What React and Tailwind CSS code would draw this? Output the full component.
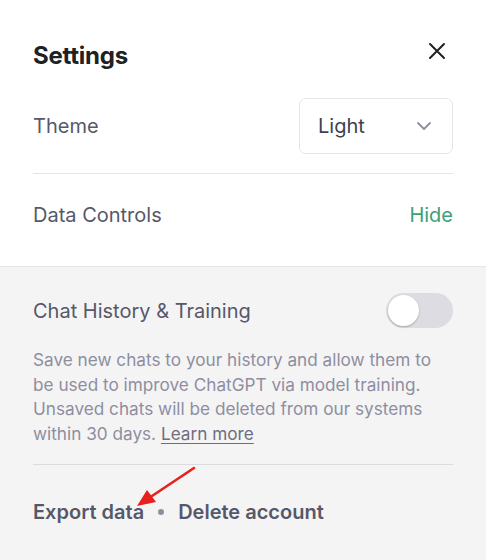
import React, { useState } from 'react';

function CloseIcon() {
  return (
    <svg width="18" height="18" viewBox="0 0 18 18" fill="none" stroke="#202123" strokeWidth="2" strokeLinecap="round">
      <path d="M2 2l14 14M16 2L2 16" />
    </svg>
  );
}

function Chevron() {
  return (
    <svg width="16" height="10" viewBox="0 0 16 10" fill="none" stroke="#8e8ea0" strokeWidth="1.8" strokeLinecap="round" strokeLinejoin="round">
      <path d="M2 2l6 6 6-6" />
    </svg>
  );
}

function Toggle({ on, onChange }) {
  return (
    <button
      onClick={() => onChange(!on)}
      className={`w-[67px] h-[35px] rounded-full p-[2px] flex items-center ${on ? 'bg-[#10a37f] justify-end' : 'bg-[#dcdce2] justify-start'}`}
    >
      <span className="block w-[31px] h-[31px] rounded-full bg-white shadow-[0_1px_2px_rgba(0,0,0,0.25)]" />
    </button>
  );
}

export default function App() {
  const [history, setHistory] = useState(false);

  return (
    <div className="w-[486px] h-[560px] bg-[#f4f4f5] font-['Inter',sans-serif] flex flex-col">
      <div className="bg-white px-[33px] pt-[36px] border-b border-[#e5e5e7]">
        <div className="flex items-center justify-between h-[34px]">
          <h1 className="text-[24px] font-bold text-[#202123] tracking-[-0.01em] mt-[5px]">Settings</h1>
          <button className="mr-[7px] -mt-[4px]"><CloseIcon /></button>
        </div>

        <div className="flex items-center justify-between mt-[28px] pb-[19px] border-b border-[#e5e5e7]">
          <span className="text-[20px] text-[#565869]">Theme</span>
          <div className="w-[154px] h-[56px] rounded-[7px] border border-[#e5e5e7] flex items-center justify-between pl-[18px] pr-[20px]">
            <span className="text-[20px] text-[#40414f]">Light</span>
            <Chevron />
          </div>
        </div>

        <div className="flex items-center justify-between h-[92px] pb-[11px]">
          <span className="text-[20px] text-[#565869]">Data Controls</span>
          <button className="text-[20px] text-[#3d9f78]">Hide</button>
        </div>
      </div>

      <div className="px-[33px] pt-[26px]">
        <div className="flex items-center justify-between">
          <span className="text-[20px] text-[#565869]">Chat History &amp; Training</span>
          <Toggle on={history} onChange={setHistory} />
        </div>
        <p className="mt-[20px] text-[17.2px] leading-[24.5px] text-[#8e8ea0]">
          Save new chats to your history and allow them to be used to improve ChatGPT via model training. Unsaved chats will be deleted from our systems within 30 days.{' '}
          <a className="underline underline-offset-[3px] text-[#6e6e80]">Learn more</a>
        </p>
        <div className="mt-[18px] border-t border-[#dcdce0]" />

        <div className="relative flex items-center gap-[14px] mt-[32px]">
          <button className="text-[20px] font-semibold text-[#565869]">Export data</button>
          <span className="w-[6px] h-[6px] rounded-full bg-[#8e8ea0]" />
          <button className="text-[20px] font-semibold text-[#565869]">Delete account</button>

          <svg className="absolute left-[100px] -top-[32px]" width="70" height="46" viewBox="0 0 70 46">
            <line x1="61" y1="3" x2="16" y2="33" stroke="#e8201c" strokeWidth="2.6" strokeLinecap="round" />
            <polygon points="4,41 14,25 23,37" fill="#e8201c" />
          </svg>
        </div>
      </div>
    </div>
  );
}
